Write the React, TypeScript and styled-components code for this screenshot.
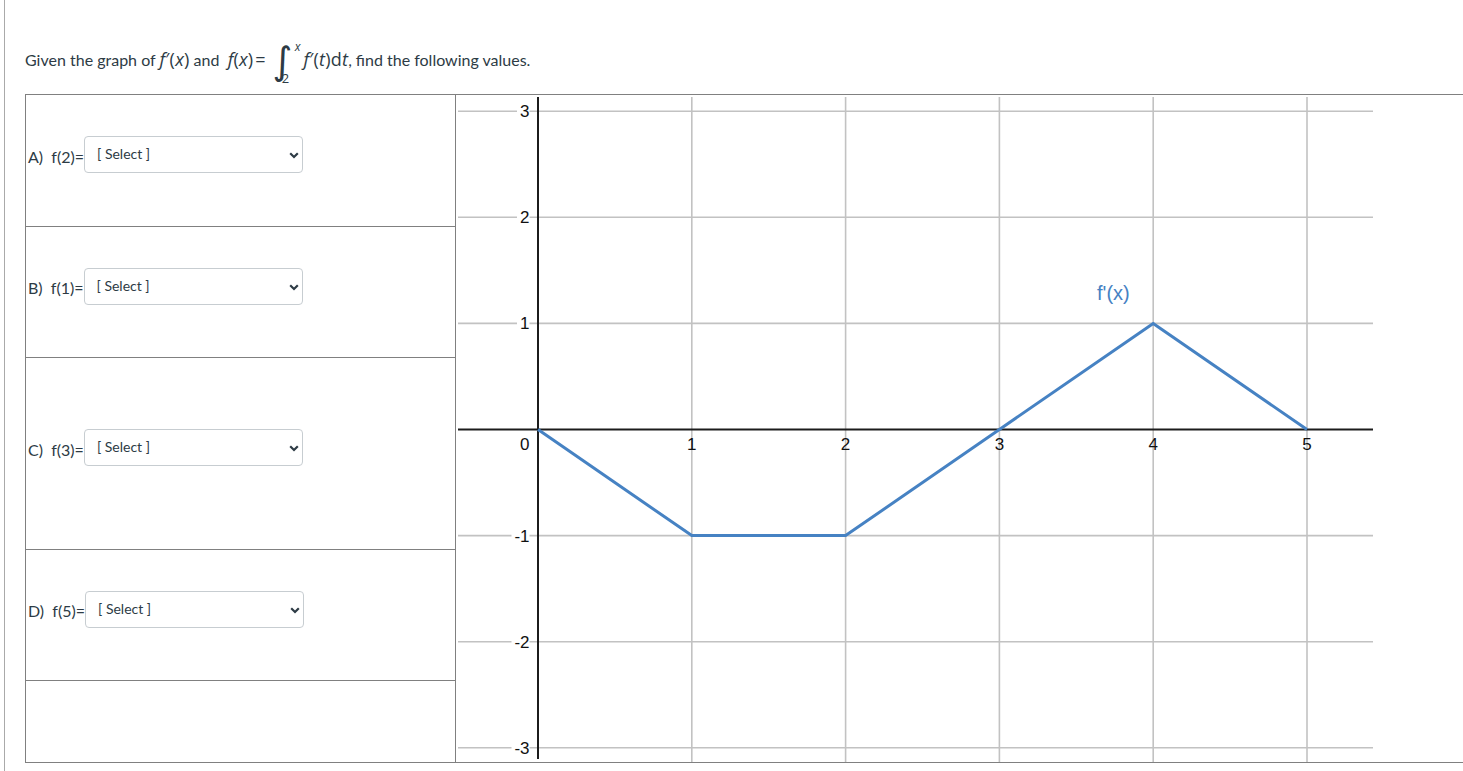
import React from 'react';
import styled, { createGlobalStyle } from 'styled-components';

const GlobalStyle = createGlobalStyle`
  html, body { margin: 0; padding: 0; overflow: hidden; background: #fff; }
  body { font-family: Lato, "Noto Sans", sans-serif; color: #2d3b45; }
`;

const Page = styled.div`
  padding-left: 4px;
  height: 771px;
`;

const Frame = styled.div`
  box-sizing: border-box;
  height: 100%;
  border-left: 1px solid #aaaaaa;
  padding: 31px 0 0 20px;
`;

const Intro = styled.div`
  display: flex;
  align-items: center;
  height: 56px;
  font-size: 16px;
  white-space: pre;
  margin-bottom: 7px;
`;

const MathRun = styled.span`
  font-family: "Open Sans", sans-serif;
  font-size: 18px;
  letter-spacing: 0.2px;
`;

const Var = styled.i`
  font-style: italic;
`;

const Rel = styled.span`
  margin-left: 2px;
`;

const Integral = styled.span`
  display: inline-flex;
  align-items: stretch;
  height: 44px;
  margin: 7px 3px 0 7px;
`;

const Sign = styled.span`
  font-family: "DejaVu Sans", sans-serif;
  font-size: 38px;
  line-height: 40px;
  display: inline-block;
`;

const Limits = styled.span`
  display: flex;
  flex-direction: column;
  justify-content: space-between;
  align-items: flex-start;
`;

const Upper = styled.span`
  font-family: "Open Sans", sans-serif;
  font-style: italic;
  font-size: 12px;
  line-height: 12px;
  margin-left: 2px;
`;

const Lower = styled.span`
  font-family: "Open Sans", sans-serif;
  font-size: 13px;
  line-height: 13px;
  margin-left: -11px;
`;

const Sheet = styled.div`
  display: grid;
  grid-template-columns: 429px 1010px;
  width: max-content;
  border: 1px solid #808080;
`;

const LeftCol = styled.div`
  display: flex;
  flex-direction: column;
`;

const QRow = styled.div<{ $h: number; $last?: boolean }>`
  box-sizing: border-box;
  height: ${(p) => p.$h}px;
  border-bottom: ${(p) => (p.$last ? 'none' : '1px solid #808080')};
  display: flex;
  align-items: center;
  padding: 0 0 12px 2px;
`;

const Label = styled.span`
  font-size: 16px;
  white-space: pre;
  margin-top: 3px;
`;

const SelectWrap = styled.span`
  position: relative;
  display: inline-flex;
`;

const Select = styled.select`
  appearance: none;
  -webkit-appearance: none;
  box-sizing: border-box;
  width: 219px;
  height: 37px;
  margin: 0;
  padding: 0 0 2px 12px;
  border: 1px solid #c7cdd1;
  border-radius: 4px;
  background: #fff;
  font-family: Lato, "Noto Sans", sans-serif;
  font-size: 14px;
  color: #2d3b45;
`;

const Chevron = styled.svg`
  position: absolute;
  right: 4px;
  top: 16px;
  pointer-events: none;
`;

const GraphCell = styled.div`
  border-left: 1px solid #808080;
  overflow: hidden;
`;

const GraphSvg = styled.svg`
  display: block;
`;

const X = (u: number) => 538 + 153.8 * u;
const Y = (v: number) => 429.5 - 106.1 * v;

const yLabels = [3, 2, 1, -1, -2, -3];
const xLabels = [1, 2, 3, 4, 5];
const fn: [number, number][] = [
  [0, 0],
  [1, -1],
  [2, -1],
  [3, 0],
  [4, 1],
  [5, 0],
];

const Graph: React.FC = () => {
  const axisFont = { fontFamily: '"Liberation Sans", Arial, sans-serif', fontSize: 17 };
  return (
    <GraphSvg width={1010} height={667} viewBox="456 95 1010 667">
      {yLabels.map((v) => (
        <line key={'h' + v} x1={458} x2={1373} y1={Y(v)} y2={Y(v)} stroke="#c2c2c2" strokeWidth={1.6} />
      ))}
      {xLabels.map((u) => (
        <line key={'v' + u} x1={X(u)} x2={X(u)} y1={97} y2={765} stroke="#c2c2c2" strokeWidth={1.6} />
      ))}
      {yLabels.map((v) => {
        const w = v < 0 ? 15 : 9.5;
        return <rect key={'r' + v} x={529.5 - w - 3} y={Y(v) - 8} width={w + 3} height={16} fill="#fff" />;
      })}
      {yLabels.map((v) => (
        <text key={'t' + v} x={529.5} y={Y(v) + 6} textAnchor="end" fill="#111" {...axisFont}>
          {v < 0 ? '-' + Math.abs(v) : v}
        </text>
      ))}
      <text x={529.5} y={450} textAnchor="end" fill="#111" {...axisFont}>
        0
      </text>
      {xLabels.map((u) => (
        <text key={'x' + u} x={X(u)} y={450} textAnchor="middle" fill="#111" {...axisFont}>
          {u}
        </text>
      ))}
      <line x1={458} x2={1373} y1={Y(0)} y2={Y(0)} stroke="#1c1c1c" strokeWidth={2} />
      <line x1={538} x2={538} y1={97} y2={759} stroke="#1c1c1c" strokeWidth={2} />
      <polyline
        points={fn.map(([u, v]) => `${X(u)},${Y(v)}`).join(' ')}
        fill="none"
        stroke="#4682c3"
        strokeWidth={3}
        strokeLinejoin="round"
      />
      <text
        x={1097}
        y={299.5}
        fill="#4682c3"
        fontFamily='"Liberation Sans", Arial, sans-serif'
        fontSize={20}
      >
        f'(x)
      </text>
    </GraphSvg>
  );
};

const Dropdown: React.FC = () => (
  <SelectWrap>
    <Select defaultValue="">
      <option value="">[ Select ]</option>
    </Select>
    <Chevron width={10} height={7} viewBox="0 0 10 7">
      <path d="M1.2 1.2 L5 5 L8.8 1.2" fill="none" stroke="#2d3b45" strokeWidth={2.2} />
    </Chevron>
  </SelectWrap>
);

const rows: { label: string; h: number }[] = [
  { label: 'A)\u00a0 f(2)=', h: 132 },
  { label: 'B)\u00a0 f(1)=', h: 131 },
  { label: 'C)\u00a0 f(3)=', h: 192 },
  { label: 'D)\u00a0 f(5)=', h: 131 },
];

export default function App() {
  return (
    <>
      <GlobalStyle />
      <Page>
        <Frame>
          <Intro>
            <span>Given the graph of </span>
            <MathRun>
              <Var>f</Var>′(<Var>x</Var>)
            </MathRun>
            <span> and  </span>
            <MathRun>
              <Var>f</Var>(<Var>x</Var>)<Rel>=</Rel>
            </MathRun>
            <Integral>
              <Sign>∫</Sign>
              <Limits>
                <Upper>x</Upper>
                <Lower>2</Lower>
              </Limits>
            </Integral>
            <MathRun>
              <Var>f</Var>′(<Var>t</Var>)d<Var>t</Var>
            </MathRun>
            <span>, find the following values.</span>
          </Intro>
          <Sheet>
            <LeftCol>
              {rows.map((r) => (
                <QRow key={r.label} $h={r.h}>
                  <Label>{r.label}</Label>
                  <Dropdown />
                </QRow>
              ))}
              <QRow $h={81} $last />
            </LeftCol>
            <GraphCell>
              <Graph />
            </GraphCell>
          </Sheet>
        </Frame>
      </Page>
    </>
  );
}
